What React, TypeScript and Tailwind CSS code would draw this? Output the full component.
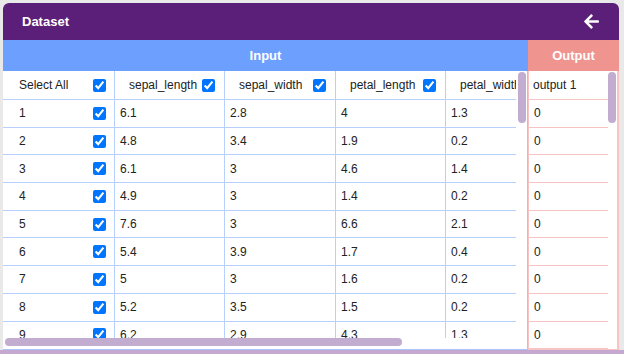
import { FaArrowLeft } from "react-icons/fa";

const COLUMNS = [
  { name: "sepal_length", w: "w-[110px]" },
  { name: "sepal_width", w: "w-[111px]" },
  { name: "petal_length", w: "w-[110px]" },
  { name: "petal_width", w: "w-[110px]" },
];

const ROWS = [
  [6.1, 2.8, 4, 1.3],
  [4.8, 3.4, 1.9, 0.2],
  [6.1, 3, 4.6, 1.4],
  [4.9, 3, 1.4, 0.2],
  [7.6, 3, 6.6, 2.1],
  [5.4, 3.9, 1.7, 0.4],
  [5, 3, 1.6, 0.2],
  [5.2, 3.5, 1.5, 0.2],
  [6.2, 2.9, 4.3, 1.3],
  [5.1, 3.8, 1.9, 0.4],
];

function Check() {
  return <input type="checkbox" defaultChecked className="m-0 h-[13px] w-[13px] shrink-0 accent-[#0075ff]" />;
}

export default function App() {
  return (
    <div className="flex h-screen w-full flex-col bg-[#e9e9e9] font-['Liberation_Sans',Arial,sans-serif] text-[12px] text-[#222]">
      <div className="ml-[3px] mt-[3px] w-[616px] overflow-hidden rounded-t-[6px] bg-white">
        {/* title bar */}
        <div className="flex h-[37px] items-center justify-between bg-[#5c1f79] pl-[19px] pr-[19px]">
          <span className="text-[13px] font-bold text-white">Dataset</span>
          <FaArrowLeft className="text-white" size={17} />
        </div>

        {/* group band */}
        <div className="flex h-[31px] text-[13px] font-bold text-white">
          <div className="flex w-[525px] items-center justify-center bg-[#6d9fff]">Input</div>
          <div className="flex flex-1 items-center justify-center bg-[#f0948f]">Output</div>
        </div>

        <div className="flex">
          {/* input table */}
          <div className="flex w-[525px] flex-col border-r border-b border-[#a9c5fb]">
            <div className="flex h-[267px]">
              <div className="w-[514px] overflow-hidden">
                <div className="flex h-[29px] w-max items-center border-b border-[#b8d0fc]">
                  <div className="flex h-full w-[112px] items-center justify-between border-r border-[#b8d0fc] pl-[16px] pr-[8px]">
                    <span>Select All</span>
                    <Check />
                  </div>
                  {COLUMNS.map((c) => (
                    <div
                      key={c.name}
                      className={`flex h-full ${c.w} items-center justify-between border-r border-[#b8d0fc] pl-[14px] pr-[9px] whitespace-nowrap`}
                    >
                      <span>{c.name}</span>
                      <Check />
                    </div>
                  ))}
                </div>
                {ROWS.map((r, i) => (
                  <div key={i} className="flex h-[27.7px] w-max border-b border-[#b8d0fc]">
                    <div className="flex h-full w-[112px] items-center justify-between border-r border-[#b8d0fc] pl-[16px] pr-[8px]">
                      <span>{i + 1}</span>
                      <Check />
                    </div>
                    {r.map((v, j) => (
                      <div key={j} className={`flex h-full ${COLUMNS[j].w} items-center border-r border-[#b8d0fc] pl-[5px]`}>
                        {v}
                      </div>
                    ))}
                  </div>
                ))}
              </div>
              <div className="w-[11px] pl-[2px] pt-[1px]">
                <div className="h-[51px] w-[8px] rounded-[4px] bg-[#c2acd0]" />
              </div>
            </div>
            <div className="h-[8px] pl-[2px]">
              <div className="h-[8px] w-[397px] rounded-full bg-[#c2acd0]" />
            </div>
          </div>

          {/* output table */}
          <div className="flex flex-1 border-r-[2px] border-b border-l border-[#f8c3c3]">
            <div className="flex-1">
              <div className="flex h-[29px] items-center border-b border-[#f8c3c3] pl-[4px]">output 1</div>
              {ROWS.slice(0, 9).map((_, i) => (
                <div key={i} className="flex h-[27.7px] items-center border-b border-[#f8c3c3] pl-[5px]">
                  0
                </div>
              ))}
            </div>
            <div className="w-[9px] pt-[1px]">
              <div className="h-[51px] w-[8px] rounded-[4px] bg-[#c2acd0]" />
            </div>
          </div>
        </div>
      </div>
      <div className="flex-1 bg-[#c4a8cf]" />
    </div>
  );
}
